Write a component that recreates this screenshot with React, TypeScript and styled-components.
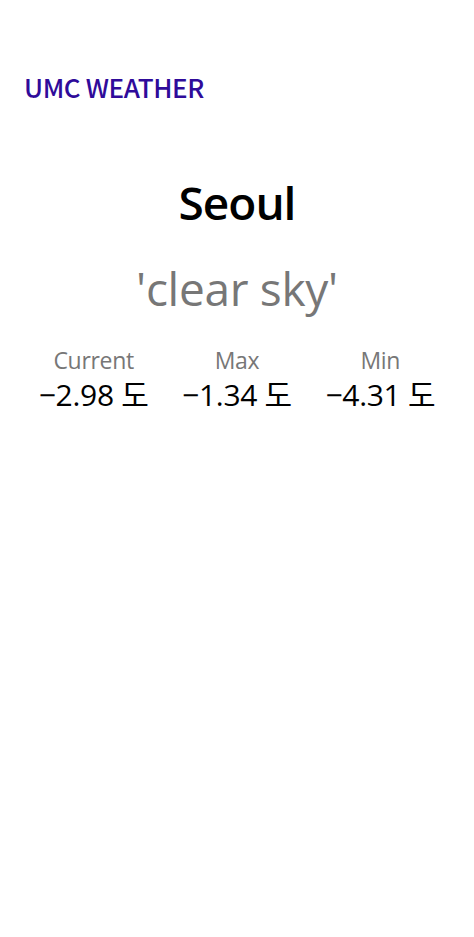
import React from "react";
import styled, { createGlobalStyle } from "styled-components";

const GlobalStyle = createGlobalStyle`
  html, body {
    margin: 0;
    padding: 0;
    background: #ffffff;
    font-family: "Open Sans", "Noto Sans CJK KR", sans-serif;
  }
`;

const Page = styled.div`
  width: 474px;
  min-height: 937px;
  display: flex;
  flex-direction: column;
  background: #fff;
`;

const Header = styled.h1`
  margin: 0;
  padding: 68px 0 0 24px;
  font-family: "Noto Sans CJK KR", "Noto Sans", sans-serif;
  font-size: 26px;
  font-weight: 500;
  line-height: 38px;
  color: #2f0b9a;
  letter-spacing: -0.4px;
`;

const Main = styled.main`
  display: flex;
  flex-direction: column;
  align-items: center;
  padding-top: 66px;
`;

const City = styled.div`
  font-size: 46px;
  font-weight: 600;
  line-height: 60px;
  color: #000;
  letter-spacing: -1px;
`;

const Description = styled.div`
  margin-top: 25px;
  font-size: 46px;
  line-height: 62px;
  color: #777;
  letter-spacing: -0.3px;
`;

const Stats = styled.div`
  margin-top: 26px;
  width: 430px;
  display: grid;
  grid-template-columns: repeat(3, 1fr);
`;

const Stat = styled.div`
  display: flex;
  flex-direction: column;
  align-items: center;
`;

const Label = styled.span`
  font-size: 23px;
  line-height: 30px;
  color: #777;
  letter-spacing: -0.3px;
`;

const Value = styled.span`
  font-size: 30px;
  line-height: 40px;
  color: #000;
  letter-spacing: -0.3px;
`;

const stats = [
  { label: "Current", value: "−2.98 도" },
  { label: "Max", value: "−1.34 도" },
  { label: "Min", value: "−4.31 도" },
];

export default function App() {
  return (
    <Page>
      <GlobalStyle />
      <Header>UMC WEATHER</Header>
      <Main>
        <City>Seoul</City>
        <Description>'clear sky'</Description>
        <Stats>
          {stats.map((s) => (
            <Stat key={s.label}>
              <Label>{s.label}</Label>
              <Value>{s.value}</Value>
            </Stat>
          ))}
        </Stats>
      </Main>
    </Page>
  );
}
